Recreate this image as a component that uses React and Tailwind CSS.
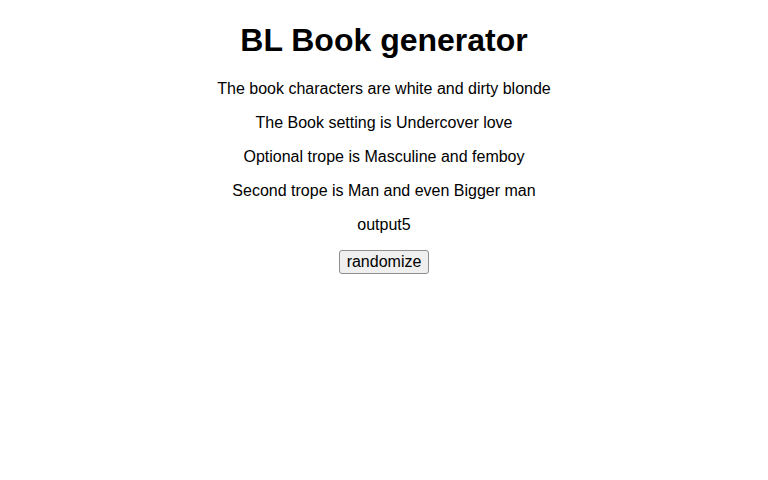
export default function App() {
  const lines = [
    'The book characters are white and dirty blonde',
    'The Book setting is Undercover love',
    'Optional trope is Masculine and femboy',
    'Second trope is Man and even Bigger man',
    'output5',
  ]

  return (
    <div className="min-h-[480px] bg-white text-black text-center font-['Liberation_Sans',Arial,sans-serif]">
      <h1 className="pt-[22px] mb-[21px] text-[32px] font-bold leading-[37px]">BL Book generator</h1>
      {lines.map((line) => (
        <p key={line} className="mb-4 text-base leading-[18px]">
          {line}
        </p>
      ))}
      <button className="px-[7px] py-[2px] text-base leading-[18px] bg-[#efefef] border border-[#8f8f8f] rounded-[3px] text-black hover:bg-[#e5e5e5]">
        randomize
      </button>
    </div>
  )
}
